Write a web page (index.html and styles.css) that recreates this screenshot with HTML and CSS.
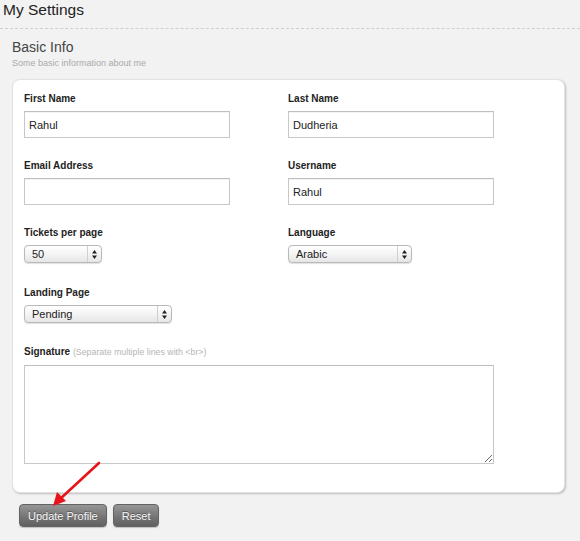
FILE: index.html
```html
<!DOCTYPE html>
<html>
<head>
<meta charset="utf-8">
<link rel="stylesheet" href="styles.css">
</head>
<body>
<header class="page-head">
  <h1 class="page-title">My Settings</h1>
</header>
<main class="section">
  <h2 class="section-title">Basic Info</h2>
  <p class="section-sub">Some basic information about me</p>
  <form class="card">
    <div class="grid">
      <div class="field">
        <label class="lbl">First Name</label>
        <input class="txt" type="text" value="Rahul">
      </div>
      <div class="field">
        <label class="lbl">Last Name</label>
        <input class="txt" type="text" value="Dudheria">
      </div>
      <div class="field">
        <label class="lbl">Email Address</label>
        <input class="txt" type="text" value="">
      </div>
      <div class="field">
        <label class="lbl">Username</label>
        <input class="txt" type="text" value="Rahul">
      </div>
      <div class="field">
        <label class="lbl">Tickets per page</label>
        <div class="sel sel-sm"><span class="sel-val">50</span><span class="sel-arrow"><svg width="5" height="9" viewBox="0 0 5 9"><path d="M2.5 0 L5 3.5 H0 Z M2.5 9 L5 5.5 H0 Z" fill="#222"/></svg></span></div>
      </div>
      <div class="field">
        <label class="lbl">Language</label>
        <div class="sel sel-md"><span class="sel-val">Arabic</span><span class="sel-arrow"><svg width="5" height="9" viewBox="0 0 5 9"><path d="M2.5 0 L5 3.5 H0 Z M2.5 9 L5 5.5 H0 Z" fill="#222"/></svg></span></div>
      </div>
      <div class="field">
        <label class="lbl">Landing Page</label>
        <div class="sel sel-lg"><span class="sel-val">Pending</span><span class="sel-arrow"><svg width="5" height="9" viewBox="0 0 5 9"><path d="M2.5 0 L5 3.5 H0 Z M2.5 9 L5 5.5 H0 Z" fill="#222"/></svg></span></div>
      </div>
      <div class="field"></div>
      <div class="field span2">
        <label class="lbl lbl-sig">Signature <span class="hint">(Separate multiple lines with &lt;br&gt;)</span></label>
        <textarea class="area"></textarea>
      </div>
    </div>
  </form>
  <div class="actions">
    <button class="btn" type="button">Update Profile</button>
    <button class="btn" type="button">Reset</button>
  </div>
</main>
<svg class="annot" width="60" height="50" viewBox="0 0 60 50">
  <line x1="49" y1="2" x2="10" y2="38" stroke="#e8141a" stroke-width="2.6" stroke-linecap="round"/>
  <path d="M3 45 L7 31 L16 40 Z" fill="#e8141a"/>
</svg>
</body>
</html>
```

FILE: styles.css
```css
html, body {
  margin: 0;
  padding: 0;
  background: #f2f2f2;
  font-family: "Liberation Sans", Arial, sans-serif;
  color: #222;
}
body {
  position: relative;
  width: 580px;
  height: 541px;
  overflow: hidden;
}
.page-head {
  height: 29px;
  border-bottom: 1px dashed #cfcfcf;
  box-sizing: border-box;
}
.page-title {
  margin: 0;
  padding: 0 0 0 3px;
  font-size: 15.5px;
  font-weight: normal;
  line-height: 20px;
  color: #222;
}
.section {
  padding: 0 15px 0 12px;
}
.section-title {
  margin: 9px 0 0 0;
  font-size: 14px;
  line-height: 18px;
  font-weight: normal;
  color: #444;
}
.section-sub {
  margin: 1px 0 0 0;
  font-size: 9px;
  line-height: 12px;
  color: #aaa;
}
.card {
  margin: 10px 0 0 0;
  background: #fff;
  border: 1px solid #e2e2e2;
  border-radius: 8px;
  box-shadow: 1px 1px 2px rgba(0,0,0,0.22);
  padding: 12px 11px 28px 11px;
  width: 553px;
  box-sizing: border-box;
}
.grid {
  display: grid;
  grid-template-columns: 264px 1fr;
  row-gap: 21px;
}
.span2 {
  grid-column: 1 / span 2;
  margin-top: -1px;
}
.field {
  display: flex;
  flex-direction: column;
  align-items: flex-start;
}
.lbl {
  font-size: 10px;
  font-weight: bold;
  line-height: 14px;
  margin-bottom: 5px;
  color: #222;
}
.lbl-sig {
  margin-bottom: 6px;
}
.hint {
  font-weight: normal;
  font-size: 8.8px;
  color: #b5b5b5;
}
.txt {
  width: 206px;
  height: 27px;
  box-sizing: border-box;
  border: 1px solid #c8c8c8;
  border-top-color: #bdbdbd;
  box-shadow: inset 0 1px 1px rgba(0,0,0,0.05);
  padding: 0 4px;
  font-family: "Liberation Sans", Arial, sans-serif;
  font-size: 11px;
  color: #222;
  background: #fff;
  margin: 0;
}
.sel {
  position: relative;
  display: flex;
  align-items: center;
  height: 18px;
  box-sizing: border-box;
  border: 1px solid #b9b9b9;
  border-radius: 4px;
  background: linear-gradient(#ffffff, #f4f4f4 50%, #e6e6e6);
  box-shadow: 0 1px 1px rgba(0,0,0,0.12);
  margin: 0 0 2px 0;
}
.sel-sm { width: 78px; }
.sel-md { width: 124px; }
.sel-lg { width: 148px; }
.sel-val {
  flex: 1;
  padding-left: 7px;
  font-size: 11px;
  line-height: 16px;
  color: #222;
}
.sel-arrow {
  width: 13px;
  height: 16px;
  border-left: 1px solid #d0d0d0;
  display: flex;
  align-items: center;
  justify-content: center;
}
.area {
  width: 470px;
  height: 99px;
  box-sizing: border-box;
  border: 1px solid #c8c8c8;
  border-top-color: #bdbdbd;
  margin: 0;
  padding: 3px;
  resize: both;
  font-family: "Liberation Sans", Arial, sans-serif;
  font-size: 11px;
}
.actions {
  display: flex;
  gap: 6px;
  margin: 11px 0 0 7px;
}
.btn {
  height: 23px;
  padding: 0 8px;
  border: 1px solid #636363;
  border-radius: 4px;
  background: linear-gradient(#969696, #767676 55%, #606060);
  color: #f6f6f6;
  font-family: "Liberation Sans", Arial, sans-serif;
  font-size: 11px;
  text-shadow: 0 -1px 0 rgba(0,0,0,0.35);
  box-shadow: 0 1px 1px rgba(0,0,0,0.2);
}
.annot {
  position: absolute;
  left: 50px;
  top: 461px;
}
```
